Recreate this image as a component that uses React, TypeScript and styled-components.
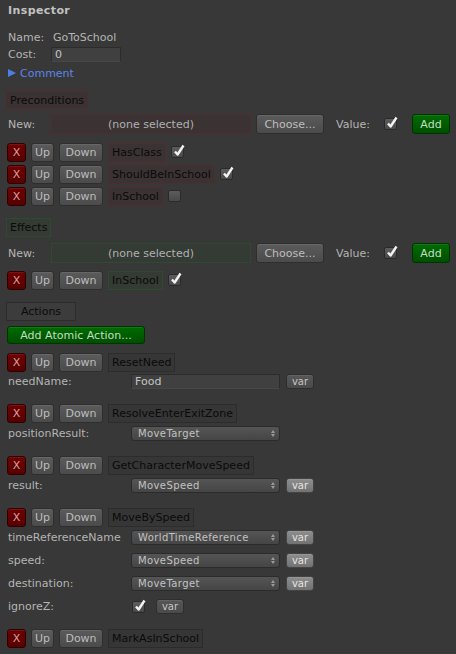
import React from "react";
import styled, { createGlobalStyle, css } from "styled-components";

const GlobalStyle = createGlobalStyle`
  html, body {
    margin: 0;
    padding: 0;
    background: #383838;
  }
  body {
    font-family: "DejaVu Sans", "Liberation Sans", sans-serif;
    font-size: 11px;
    color: #b4b4b4;
  }
`;

type Tone = "red" | "green" | "gray";

const tones = {
  red: { bg: "#3b3333", border: "#4d2d2d" },
  green: { bg: "#343b34", border: "#2f4a2f" },
  gray: { bg: "#3c3c3c", border: "#2c2c2c" },
};

const Panel = styled.div`
  width: 456px;
  height: 654px;
  box-sizing: border-box;
  padding: 4px 6px 0 7px;
  display: flex;
  flex-direction: column;
  overflow: hidden;
`;

const Title = styled.div`
  font-weight: bold;
  color: #c2c2c2;
  height: 14px;
  line-height: 14px;
  padding-left: 1px;
  letter-spacing: 0.4px;
`;

const Row = styled.div<{ $h: number; $top?: number }>`
  display: flex;
  align-items: center;
  height: ${(p) => p.$h}px;
  margin-top: ${(p) => p.$top ?? 0}px;
  flex-shrink: 0;
`;

const Label = styled.span<{ $w?: number }>`
  padding-left: 1px;
  width: ${(p) => (p.$w ? `${p.$w}px` : "auto")};
  flex-shrink: 0;
  white-space: nowrap;
`;

const TextBox = styled.div<{ $w: number }>`
  width: ${(p) => p.$w}px;
  height: 15px;
  box-sizing: border-box;
  background: #404040;
  border: 1px solid #2c2c2c;
  border-bottom-color: #474747;
  color: #c4c4c4;
  line-height: 13px;
  padding-left: 3px;
`;

const Foldout = styled.div`
  display: flex;
  align-items: center;
  gap: 4px;
  color: #5a86ea;
  padding-left: 1px;
`;

const Triangle = styled.span`
  width: 0;
  height: 0;
  border-top: 4.5px solid transparent;
  border-bottom: 4.5px solid transparent;
  border-left: 8px solid #4c7ee6;
`;

const Tag = styled.div<{ $tone: Tone; $h?: number }>`
  box-sizing: border-box;
  height: ${(p) => p.$h ?? 19}px;
  display: inline-flex;
  align-items: center;
  padding: 0 3px;
  background: ${(p) => tones[p.$tone].bg};
  border: 1px solid ${(p) => tones[p.$tone].border};
  color: #0a0a0a;
  white-space: nowrap;
  flex-shrink: 0;
`;

const SectionTag = styled(Tag)<{ $w?: number }>`
  margin-left: -1px;
  align-self: flex-start;
  justify-content: center;
  width: ${(p) => (p.$w ? `${p.$w}px` : "auto")};
`;

const Picker = styled.div<{ $tone: Tone }>`
  box-sizing: border-box;
  width: 200px;
  height: 20px;
  display: flex;
  align-items: center;
  justify-content: center;
  background: ${(p) => tones[p.$tone].bg};
  border: 1px solid ${(p) => tones[p.$tone].border};
  color: #b0b0b0;
`;

type Kind = "plain" | "danger" | "go" | "var" | "varOn";

const kinds = {
  plain: css`
    background: linear-gradient(#5b5b5b, #4b4b4b);
    border-color: #2e2e2e;
    color: #bdbdbd;
  `,
  danger: css`
    background: linear-gradient(#6e0000, #560000);
    border-color: #2e0000;
    color: #d9a2a2;
  `,
  go: css`
    background: linear-gradient(#006c00, #004f00);
    border-color: #003300;
    color: #c3dcc3;
  `,
  var: css`
    background: linear-gradient(#575757, #4a4a4a);
    border-color: #2e2e2e;
    color: #c6c6c6;
    font-size: 10px;
  `,
  varOn: css`
    background: linear-gradient(#8e8e8e, #727272);
    border-color: #444;
    color: #e4e4e4;
    font-size: 10px;
  `,
};

const Button = styled.div<{ $kind?: Kind; $w: number; $h?: number; $ml?: number }>`
  box-sizing: border-box;
  width: ${(p) => p.$w}px;
  height: ${(p) => p.$h ?? 19}px;
  margin-left: ${(p) => p.$ml ?? 0}px;
  display: flex;
  align-items: center;
  justify-content: center;
  border: 1px solid;
  border-radius: 3px;
  box-shadow: inset 0 1px 0 rgba(255, 255, 255, 0.08);
  flex-shrink: 0;
  white-space: nowrap;
  ${(p) => kinds[p.$kind ?? "plain"]}
`;

const CheckBox = styled.div<{ $ml?: number }>`
  box-sizing: border-box;
  width: 13px;
  height: 12px;
  margin-left: ${(p) => p.$ml ?? 0}px;
  border: 1px solid #2a2a2a;
  border-radius: 2px;
  background: linear-gradient(#5c5c5c, #494949);
  position: relative;
  flex-shrink: 0;

  svg {
    position: absolute;
    left: 1px;
    top: -3px;
  }
`;

const Popup = styled.div<{ $w?: number }>`
  box-sizing: border-box;
  width: ${(p) => p.$w ?? 149}px;
  height: 15px;
  display: flex;
  align-items: center;
  justify-content: space-between;
  padding: 0 4px 0 6px;
  background: linear-gradient(#555, #454545);
  border: 1px solid #2b2b2b;
  border-radius: 3px;
  color: #c2c2c2;
  font-size: 10px;
  letter-spacing: 0.4px;
  flex-shrink: 0;
  overflow: hidden;
  white-space: nowrap;
`;

const Arrows = styled.span`
  display: flex;
  flex-direction: column;
  gap: 1px;

  &::before,
  &::after {
    content: "";
    border-left: 2.5px solid transparent;
    border-right: 2.5px solid transparent;
  }
  &::before {
    border-bottom: 3px solid #9a9a9a;
  }
  &::after {
    border-top: 3px solid #9a9a9a;
  }
`;

const ActionBlock = styled.div<{ $top: number }>`
  display: flex;
  flex-direction: column;
  gap: 8px;
  margin-top: ${(p) => p.$top}px;
  flex-shrink: 0;
`;

const FieldRow = styled.div`
  display: flex;
  align-items: center;
  height: 15px;
  margin-top: -5px;

  & + & {
    margin-top: 0;
  }
`;

function Check({ on = true, ml }: { on?: boolean; ml?: number }) {
  return (
    <CheckBox $ml={ml}>
      {on && (
        <svg width="12" height="13" viewBox="0 0 12 13">
          <path d="M2 7.5 L4.6 10.5 L10.5 1.5" fill="none" stroke="#f2f2f2" strokeWidth="2.4" strokeLinejoin="round" />
        </svg>
      )}
    </CheckBox>
  );
}

function ItemControls() {
  return (
    <>
      <Button $kind="danger" $w={19}>X</Button>
      <Button $w={23} $ml={5}>Up</Button>
      <Button $w={44} $ml={5}>Down</Button>
    </>
  );
}

function ItemRow({ name, tone, on, top = 2 }: { name: string; tone: Tone; on: boolean; top?: number }) {
  return (
    <Row $h={20} $top={top}>
      <ItemControls />
      <Tag $tone={tone} style={{ marginLeft: 5 }}>{name}</Tag>
      <Check on={on} ml={5} />
    </Row>
  );
}

function ActionHeader({ name }: { name: string }) {
  return (
    <Row $h={20}>
      <ItemControls />
      <Tag $tone="gray" style={{ marginLeft: 5, background: "#363636" }}>{name}</Tag>
    </Row>
  );
}

function NewRow({ tone, top }: { tone: Tone; top: number }) {
  return (
    <Row $h={20} $top={top}>
      <Label $w={43}>New:</Label>
      <Picker $tone={tone}>(none selected)</Picker>
      <Button $w={68} $h={20} $ml={5}>Choose...</Button>
      <Label $w={48} style={{ marginLeft: 11 }}>Value:</Label>
      <Check />
      <Button $kind="go" $w={38} $h={20} style={{ marginLeft: "auto" }}>Add</Button>
    </Row>
  );
}

function Field({ label, children }: { label: string; children: React.ReactNode }) {
  return (
    <FieldRow>
      <Label $w={123}>{label}</Label>
      {children}
    </FieldRow>
  );
}

function PopupField({ label, value, on }: { label: string; value: string; on?: boolean }) {
  return (
    <Field label={label}>
      <Popup>
        <span>{value}</span>
        <Arrows />
      </Popup>
      {on && <Button $kind="varOn" $w={28} $h={15} $ml={6}>var</Button>}
    </Field>
  );
}

export default function App() {
  return (
    <Panel>
      <GlobalStyle />
      <Title>Inspector</Title>

      <Row $h={16} $top={11}>
        <Label $w={45}>Name:</Label>
        <span>GoToSchool</span>
      </Row>
      <Row $h={17} $top={1}>
        <Label $w={43}>Cost:</Label>
        <TextBox $w={70}>0</TextBox>
      </Row>
      <Row $h={16} $top={2}>
        <Foldout>
          <Triangle />
          Comment
        </Foldout>
      </Row>

      <SectionTag $tone="red" $h={18} style={{ marginTop: 10 }}>Preconditions</SectionTag>
      <NewRow tone="red" top={5} />
      <ItemRow name="HasClass" tone="red" on top={8} />
      <ItemRow name="ShouldBeInSchool" tone="red" on />
      <ItemRow name="InSchool" tone="red" on={false} />

      <SectionTag $tone="green" style={{ marginTop: 12 }}>Effects</SectionTag>
      <NewRow tone="green" top={6} />
      <ItemRow name="InSchool" tone="green" on top={7} />

      <SectionTag $tone="gray" $w={70} style={{ marginTop: 12 }}>Actions</SectionTag>
      <Row $h={18} $top={5}>
        <Button $kind="go" $w={138} $h={18}>Add Atomic Action...</Button>
      </Row>

      <ActionBlock $top={8}>
        <ActionHeader name="ResetNeed" />
        <FieldRow style={{ marginTop: -6 }}>
          <Label $w={123}>needName:</Label>
          <TextBox $w={149}>Food</TextBox>
          <Button $kind="var" $w={28} $h={15} $ml={6}>var</Button>
        </FieldRow>
      </ActionBlock>

      <ActionBlock $top={14}>
        <ActionHeader name="ResolveEnterExitZone" />
        <PopupField label="positionResult:" value="MoveTarget" />
      </ActionBlock>

      <ActionBlock $top={14}>
        <ActionHeader name="GetCharacterMoveSpeed" />
        <PopupField label="result:" value="MoveSpeed" on />
      </ActionBlock>

      <ActionBlock $top={14}>
        <ActionHeader name="MoveBySpeed" />
        <PopupField label="timeReferenceName" value="WorldTimeReference" on />
        <PopupField label="speed:" value="MoveSpeed" on />
        <PopupField label="destination:" value="MoveTarget" on />
        <Field label="ignoreZ:">
          <Check ml={1} />
          <Button $kind="var" $w={28} $h={15} $ml={11}>var</Button>
        </Field>
      </ActionBlock>

      <ActionBlock $top={14}>
        <ActionHeader name="MarkAsInSchool" />
      </ActionBlock>
    </Panel>
  );
}
